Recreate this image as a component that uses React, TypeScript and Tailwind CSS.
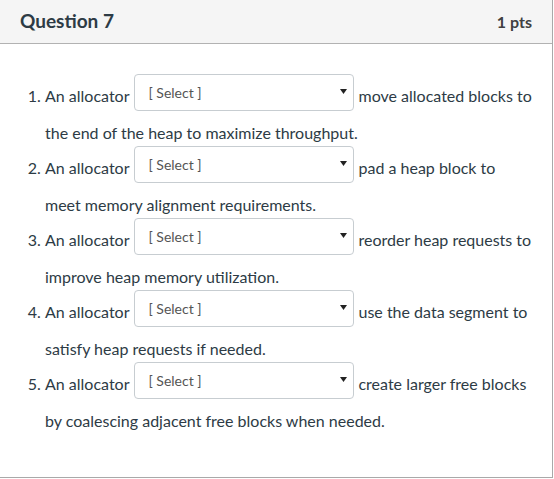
import { FC } from 'react';

interface Item {
  after: string;
  rest: string;
}

const items: Item[] = [
  { after: 'move allocated blocks to', rest: 'the end of the heap to maximize throughput.' },
  { after: 'pad a heap block to', rest: 'meet memory alignment requirements.' },
  { after: 'reorder heap requests to', rest: 'improve heap memory utilization.' },
  { after: 'use the data segment to', rest: 'satisfy heap requests if needed.' },
  { after: 'create larger free blocks', rest: 'by coalescing adjacent free blocks when needed.' },
];

const FakeSelect: FC = () => (
  <span className="inline-flex items-center justify-between w-[220px] h-[37px] ml-[5px] mr-[4px] pl-[13px] pr-[6px] align-middle -mt-[10px] border border-[#c7cdd1] rounded-[4px] bg-white text-[14px] text-[#555] leading-none">
    <span>[ Select ]</span>
    <svg width="7" height="5" viewBox="0 0 7 5" className="mb-[2px]">
      <path d="M0 0 L7 0 L3.5 5 Z" fill="#222" />
    </svg>
  </span>
);

const App: FC = () => {
  return (
    <div
      className="w-[553px] h-[478px] bg-white border-r border-b border-[#a9a9a9] text-[#2d3b45]"
      style={{ fontFamily: 'Lato, "Open Sans", sans-serif' }}
    >
      <div className="h-[44px] bg-[#f5f5f5] border-b border-[#b2b2b2] flex items-center justify-between px-5">
        <span className="text-[19px] font-bold text-[#2d3b45]">Question 7</span>
        <span className="text-[16px] font-bold text-[#404040]">1 pts</span>
      </div>

      <ol className="list-decimal pl-[45px] pt-[34px] text-[16px] leading-[36px]">
        {items.map((item, index) => (
          <li key={index} className="whitespace-nowrap">
            An allocator
            <FakeSelect />
            {item.after}
            <br />
            <span className="relative top-[1px]">{item.rest}</span>
          </li>
        ))}
      </ol>
    </div>
  );
};

export default App;
